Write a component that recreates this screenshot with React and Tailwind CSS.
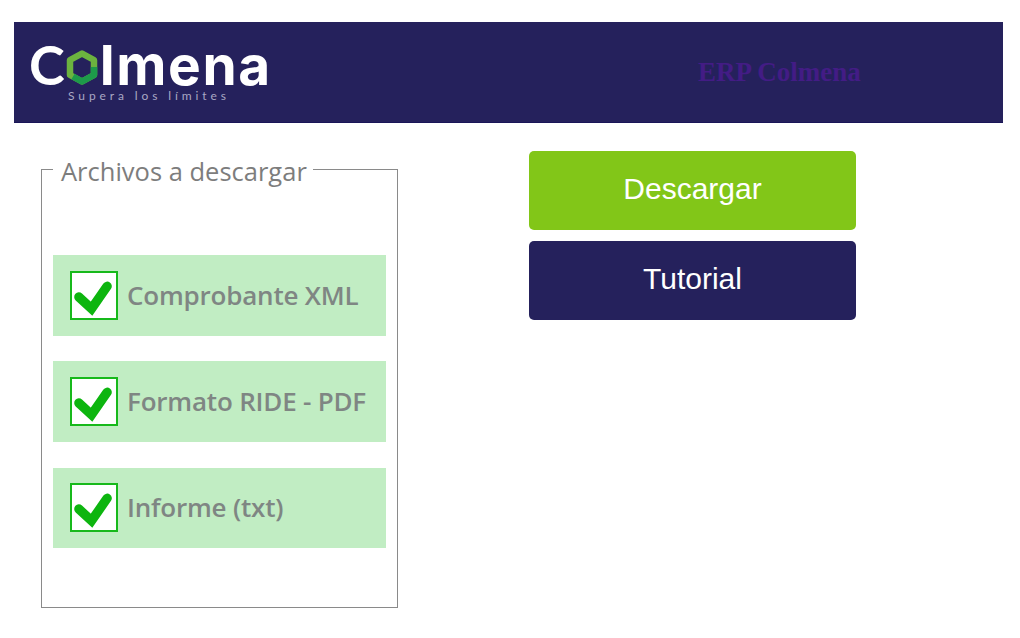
import React from 'react';

const items = ['Comprobante XML', 'Formato RIDE - PDF', 'Informe (txt)'];

const Logo = () => (
    <div className="w-[240px] ml-[15px] mt-[20px] shrink-0">
        <div className="flex items-center h-[46px] text-white leading-[46px] whitespace-nowrap">
            <span className="font-['Lato',sans-serif] font-bold text-[54px]">C</span>
            <svg viewBox="0 0 34 38" className="w-[34px] h-[38px] mt-[5px] shrink-0">
                <path d="M17 4.5 L29 11 V26 L17 32.5 L5 26 V11 Z" fill="none" stroke="#6cb33f" strokeWidth="6.5" strokeLinejoin="round"/>
                <path d="M29 18 V26 L17 32.5 L8 27.5" fill="none" stroke="#1d9a4a" strokeWidth="6.5" strokeLinejoin="round"/>
            </svg>
            <span className="font-['Inter',sans-serif] font-bold text-[55px] tracking-[1.6px] ml-[1px]">lmena</span>
        </div>
        <div className="ml-[39px] mt-[1px] font-['Lato',sans-serif] text-[12px] leading-[14px] tracking-[3.9px] text-[#a9a8c4] whitespace-nowrap">
            Supera los límites
        </div>
    </div>
);

const CheckRow = ({label}) => (
    <label className="flex items-center h-[80.75px] pl-[17px] bg-[#c1edc3]">
        <span className="flex items-center justify-center w-[48px] h-[49px] bg-white border-2 border-[#17b91b]">
            <svg viewBox="0 0 45 45" className="w-[45px] h-[45px]">
                <path d="M7 24 L20 36 L36 13" fill="none" stroke="#0db50f" strokeWidth="9.5" strokeLinecap="round" strokeLinejoin="miter"/>
            </svg>
        </span>
        <span className="ml-[9px] text-[26px] font-semibold text-[#7f8683] font-['Open_Sans',sans-serif] whitespace-nowrap tracking-[-0.2px]">{label}</span>
    </label>
);

export default function App() {
    return (
        <div className="w-[1020px] h-[638px] bg-white overflow-hidden px-[14px] pt-[22px]">
            <header className="flex w-[989px] h-[101px] bg-[#25215c] border-b border-[#1a1658]">
                <Logo />
                <h1 className="ml-[429px] mt-[33px] font-['Liberation_Serif',serif] font-bold text-[27px] leading-[34px] text-[#431c85] whitespace-nowrap">
                    ERP Colmena
                </h1>
            </header>
            <div className="flex">
                <fieldset className="ml-[27px] mt-[28px] w-[357px] h-[457px] px-[11px] border border-[#8a8a8a]">
                    <legend className="pl-[8px] pr-[6px] pt-[4px] text-[25.5px] leading-[32px] text-[#7d7d7d] font-['Open_Sans',sans-serif]">
                        Archivos a descargar
                    </legend>
                    <div className="flex flex-col gap-[25.5px] mt-[68px]">
                        {items.map((item) => <CheckRow key={item} label={item}/>)}
                    </div>
                </fieldset>
                <div className="ml-[131px] mt-[28px] flex flex-col gap-[11px] w-[327px]">
                    <button className="h-[79px] pb-[4px] rounded-[5px] bg-[#82c618] text-white text-[30px] font-['Liberation_Sans',sans-serif]">Descargar</button>
                    <button className="h-[79px] pb-[4px] rounded-[5px] bg-[#25215c] text-white text-[30px] font-['Liberation_Sans',sans-serif]">Tutorial</button>
                </div>
            </div>
        </div>
    );
}
